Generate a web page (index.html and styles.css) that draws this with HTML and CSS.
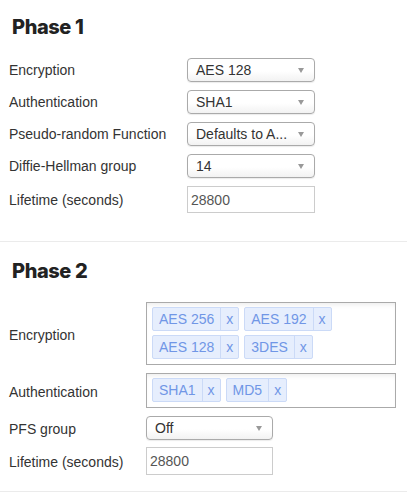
FILE: index.html
```html
<!DOCTYPE html>
<html lang="en">
<head>
    <meta charset="UTF-8">
    <meta name="viewport" content="width=device-width, initial-scale=1.0">
    <title>VPN Settings</title>
    <link rel="stylesheet" href="styles.css">
</head>
<body>

    <section class="phase phase-1">
        <h2>Phase 1</h2>
        <div class="form">
            <label>Encryption</label>
            <div class="select">AES 128</div>

            <label>Authentication</label>
            <div class="select">SHA1</div>

            <label>Pseudo-random Function</label>
            <div class="select">Defaults to A...</div>

            <label>Diffie-Hellman group</label>
            <div class="select">14</div>

            <label>Lifetime (seconds)</label>
            <input type="text" value="28800">
        </div>
    </section>

    <section class="phase phase-2">
        <h2>Phase 2</h2>
        <div class="form">
            <label>Encryption</label>
            <div class="multi">
                <span class="tag"><span class="tag-text">AES 256</span><span class="tag-x">x</span></span>
                <span class="tag"><span class="tag-text">AES 192</span><span class="tag-x">x</span></span>
                <span class="tag"><span class="tag-text">AES 128</span><span class="tag-x">x</span></span>
                <span class="tag"><span class="tag-text">3DES</span><span class="tag-x">x</span></span>
            </div>

            <label>Authentication</label>
            <div class="multi">
                <span class="tag"><span class="tag-text">SHA1</span><span class="tag-x">x</span></span>
                <span class="tag"><span class="tag-text">MD5</span><span class="tag-x">x</span></span>
            </div>

            <label>PFS group</label>
            <div class="select short">Off</div>

            <label class="tight">Lifetime (seconds)</label>
            <input type="text" class="short tight" value="28800">
        </div>
    </section>

</body>
</html>
```

FILE: styles.css
```css
* {
    margin: 0;
    padding: 0;
    box-sizing: border-box;
}
body {
    font-family: "Liberation Sans", Arial, sans-serif;
    font-size: 14px;
    color: #333;
    background-color: #fff;
    width: 407px;
}
.phase {
    padding: 15px 9px 28px 9px;
    border-bottom: 1px solid #ebebeb;
}
.phase-2 {
    padding-top: 17px;
    padding-bottom: 16px;
}
h2 {
    font-family: Inter, "Noto Sans", sans-serif;
    font-size: 20px;
    line-height: 24px;
    font-weight: 800;
    color: #222;
    letter-spacing: -0.4px;
    margin: 0 0 19px 3px;
}
.form {
    display: grid;
    grid-template-columns: 178px 128px;
    row-gap: 8px;
    align-items: center;
}
.phase-2 .form {
    grid-template-columns: 137px 250px;
}
.phase-2 label {
    padding-top: 2px;
}
label {
    color: #333;
}
.select {
    position: relative;
    height: 24px;
    line-height: 23px;
    padding-left: 8px;
    border: 1px solid #aaa;
    border-radius: 4px;
    background: linear-gradient(#fff 0%, #fff 55%, #f2f2f2 100%);
    box-shadow: 0 1px 1px rgba(0, 0, 0, 0.08);
    color: #333;
    white-space: nowrap;
    overflow: hidden;
}
.select::after {
    content: "";
    position: absolute;
    right: 10px;
    top: 9px;
    border-left: 3.5px solid transparent;
    border-right: 3.5px solid transparent;
    border-top: 5px solid #999;
}
.short {
    width: 127px;
}
input[type="text"] {
    height: 27px;
    padding-left: 3px;
    border: 1px solid #ccc;
    font-family: "Liberation Sans", Arial, sans-serif;
    font-size: 14px;
    color: #555;
    outline: none;
}
input.short {
    height: 28px;
}
.multi {
    display: flex;
    flex-wrap: wrap;
    gap: 4px 5px;
    padding: 4px 5px 5px 5px;
    border: 1px solid #aaa;
    box-shadow: inset 0 4px 6px -4px rgba(0, 0, 0, 0.12);
    min-height: 35px;
}
.tag {
    display: flex;
    height: 24px;
    line-height: 22px;
    border: 1px solid #cbdaf7;
    border-radius: 2px;
    background-color: #e6eefd;
    color: #7096e6;
}
.tag-text {
    padding: 0 6px 0 6px;
    border-right: 1px solid #cbdaf7;
}
.tag-x {
    padding: 0 5px 0 5px;
}
.tight {
    margin-top: -1px;
}
```
